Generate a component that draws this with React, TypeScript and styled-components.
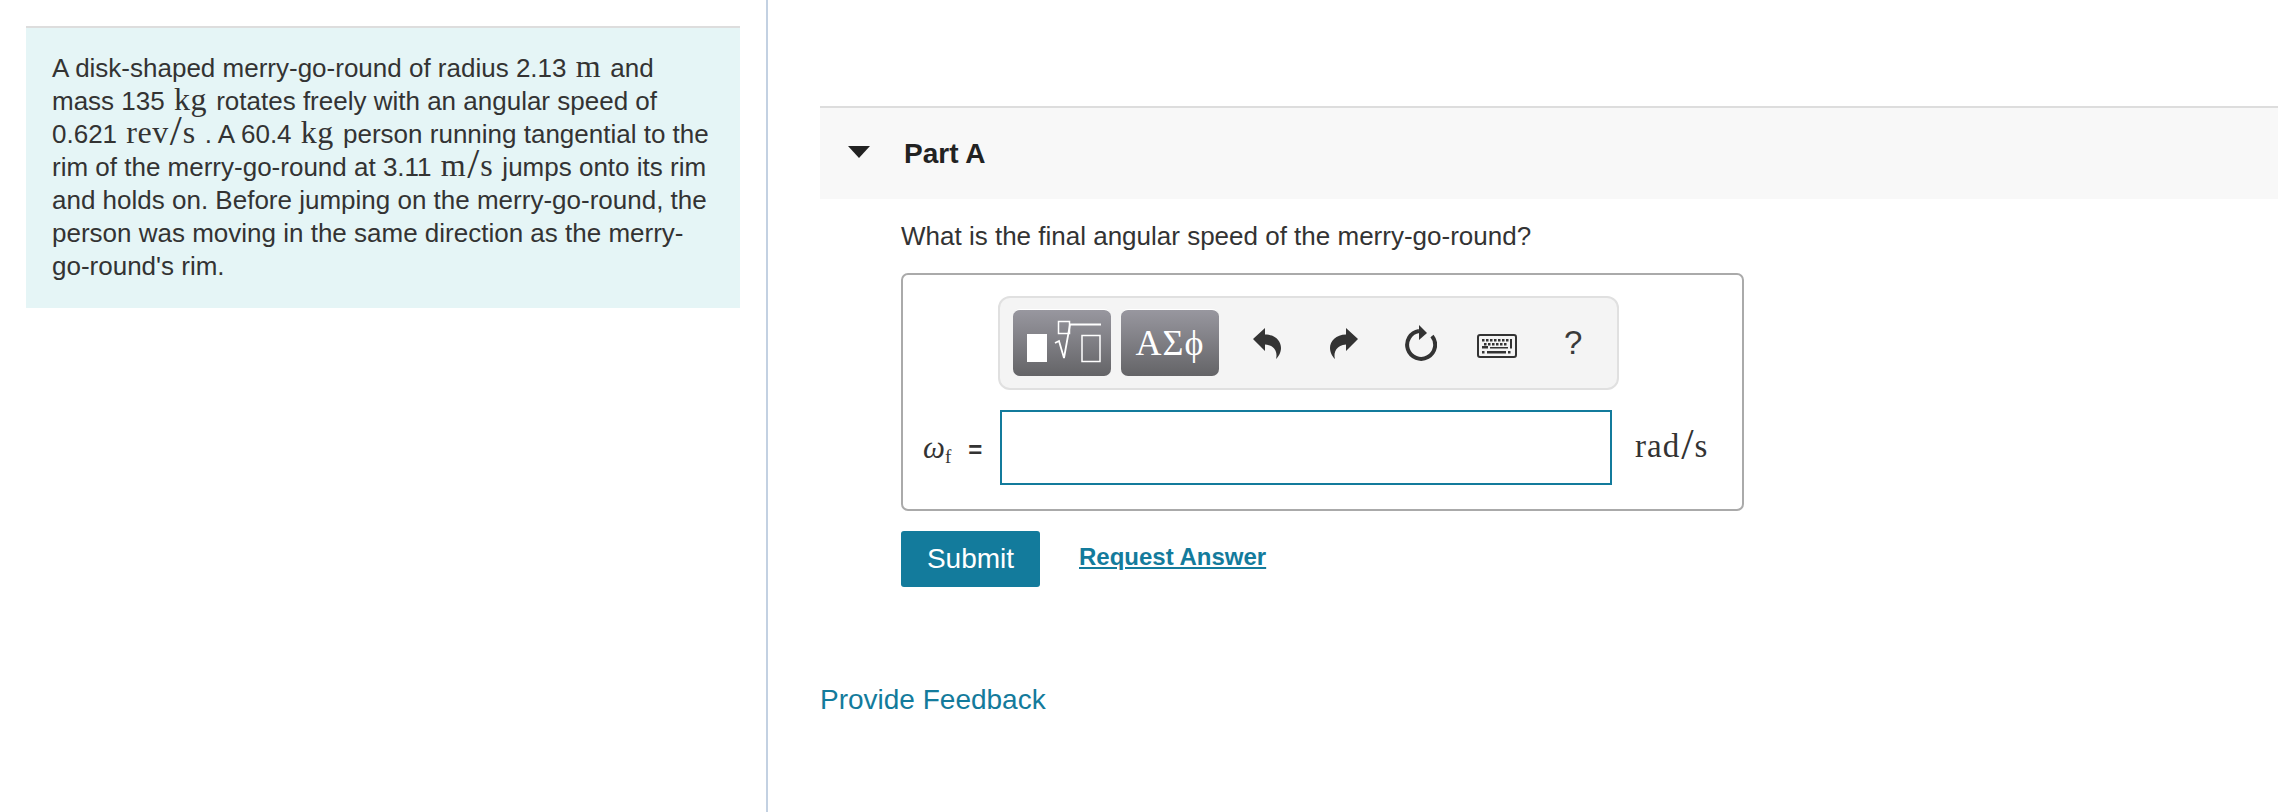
import React from "react";
import styled, { createGlobalStyle } from "styled-components";

const Global = createGlobalStyle`
  html, body { margin: 0; padding: 0; background: #fff; }
  body { font-family: "Liberation Sans", Arial, sans-serif; color: #333; }
`;

const Page = styled.div`
  display: flex;
  height: 812px;
  overflow: hidden;
`;

const LeftColumn = styled.aside`
  box-sizing: border-box;
  width: 768px;
  height: 100%;
  flex: none;
  padding: 26px 26px 0 26px;
  border-right: 2px solid #c3d1e2;
`;

const Statement = styled.div`
  box-sizing: border-box;
  width: 714px;
  height: 282px;
  padding: 24px 26px 0;
  background: #e5f5f6;
  border-top: 2px solid #dddddd;
  font-size: 26px;
  line-height: 33px;
`;

const Unit = styled.span`
  font-family: "Liberation Serif", "Times New Roman", serif;
  font-size: 32px;
  line-height: 0;
  letter-spacing: 0.5px;
  padding: 0 2px;
`;

const Slash = styled.span`
  font-size: 1.35em;
  font-weight: 400;
  line-height: 0;
  vertical-align: -2px;
  letter-spacing: 0;
  padding: 0 1px;
`;

const RightColumn = styled.main`
  flex: 1;
  padding: 106px 0 0 52px;
`;

const PartHeader = styled.header`
  box-sizing: border-box;
  height: 93px;
  display: flex;
  align-items: center;
  background: #f8f8f8;
  border-top: 2px solid #dddddd;
  padding-left: 28px;
`;

const Caret = styled.span`
  width: 0;
  height: 0;
  border-left: 11px solid transparent;
  border-right: 11px solid transparent;
  border-top: 12px solid #222;
  margin-right: 34px;
  margin-top: -3px;
`;

const PartTitle = styled.h2`
  margin: 0;
  font-size: 28px;
  font-weight: 700;
  color: #222;
`;

const PartBody = styled.section`
  padding-left: 81px;
`;

const Question = styled.p`
  margin: 21px 0 20px;
  font-size: 26px;
  line-height: 33px;
`;

const AnswerBox = styled.div`
  box-sizing: border-box;
  width: 843px;
  height: 238px;
  border: 2px solid #aaaaaa;
  border-radius: 7px;
  padding: 21px 0 0 21px;
`;

const Toolbar = styled.div`
  box-sizing: border-box;
  width: 621px;
  height: 94px;
  margin-left: 74px;
  display: flex;
  align-items: center;
  padding-left: 13px;
  background: #f4f4f4;
  border: 2px solid #e0e0e0;
  border-radius: 12px;
`;

const TemplateButton = styled.button`
  box-sizing: border-box;
  width: 98px;
  height: 67px;
  margin: -2px 10px 0 0;
  padding: 0;
  display: flex;
  align-items: center;
  justify-content: center;
  border: none;
  border-radius: 7px;
  border-top: 1px solid #fff;
  background: linear-gradient(#98979f, #646467);
  color: #fff;
`;

const GreekLabel = styled.span`
  font-family: "Liberation Serif", "DejaVu Serif", serif;
  font-size: 36px;
  letter-spacing: 1px;
`;

const ToolSlot = styled.span<{ $drop?: number }>`
  width: 76.500px;
  flex: none;
  display: flex;
  align-items: center;
  justify-content: center;
  margin-top: ${(p) => p.$drop ?? 0}px;
  color: #333;
`;

const HelpMark = styled.span`
  font-size: 33px;
  color: #3a3a3a;
`;

const InputRow = styled.div`
  display: flex;
  align-items: center;
  margin-top: 20px;
`;

const Label = styled.span`
  width: 76px;
  flex: none;
  display: flex;
  align-items: baseline;
  font-family: "Liberation Serif", serif;
  font-size: 29px;
  color: #333;
`;

const Omega = styled.i`
  font-size: 31px;
  margin-left: -1px;
`;

const Sub = styled.span`
  font-size: 19px;
  position: relative;
  top: 5px;
  margin-right: 17px;
`;

const Equals = styled.span`
  font-family: "Liberation Sans", sans-serif;
  font-size: 24px;
  font-weight: 700;
`;

const AnswerInput = styled.input`
  box-sizing: border-box;
  width: 612px;
  height: 75px;
  flex: none;
  background: #fff;
  border: 2px solid #137b9c;
  outline: none;
`;

const UnitLabel = styled.span`
  margin-left: 23px;
  margin-top: -2px;
  font-family: "Liberation Serif", serif;
  font-size: 33px;
  letter-spacing: 1px;
  color: #333;
`;

const Actions = styled.div`
  display: flex;
  align-items: center;
  margin-top: 20px;
`;

const SubmitButton = styled.button`
  box-sizing: border-box;
  width: 139px;
  height: 56px;
  border: none;
  border-radius: 3px;
  background: #137b9c;
  color: #fff;
  font-family: "Liberation Sans", sans-serif;
  font-size: 28px;
`;

const RequestLink = styled.a`
  margin: -4px 0 0 39px;
  font-size: 24px;
  font-weight: 700;
  color: #137b9c;
  text-decoration: underline;
`;

const FeedbackLink = styled.a`
  display: block;
  margin-top: 93px;
  font-size: 28px;
  line-height: 40px;
  color: #137b9c;
`;

const TemplateIcon = () => (
  <svg width="98" height="66" viewBox="0 0 98 66" fill="none" aria-hidden="true">
    <rect x="14" y="24" width="20" height="28" fill="#fff" />
    <rect x="45.500" y="11.500" width="11" height="12" stroke="#fff" strokeWidth="1.500" />
    <path d="M42 33l4-2 5 17 6-33.500h31" stroke="#fff" strokeWidth="1.800" />
    <rect x="69" y="25.500" width="18" height="26" stroke="#fff" strokeWidth="1.500" />
  </svg>
);

const UndoIcon = () => (
  <svg width="28" height="31" viewBox="0 0 28 31" aria-hidden="true">
    <path d="M0 11 12 0v6.500C22 6.500 28 13 28 20c0 5-3 9-5 11 2-7-2-14-11-14.500V23z" fill="currentColor" />
  </svg>
);

const RedoIcon = () => (
  <svg width="28" height="31" viewBox="0 0 28 31" aria-hidden="true">
    <path d="M28 11 16 0v6.500C6 6.500 0 13 0 20c0 5 3 9 5 11-2-7 2-14 11-14.500V23z" fill="currentColor" />
  </svg>
);

const ResetIcon = () => (
  <svg width="34" height="38" viewBox="0 0 34 38" fill="none" aria-hidden="true">
    <path d="M29 12A14 14 0 1 1 16 7" stroke="currentColor" strokeWidth="4" />
    <path d="M16 1l8 8-8 7z" fill="currentColor" />
  </svg>
);

const KeyboardIcon = () => {
  const keys = [
    [5, 5], [9, 5], [13, 5], [17, 5], [21, 5], [25, 5], [29, 5],
    [7, 9], [11, 9], [15, 9], [19, 9], [23, 9], [27, 9],
    [5, 17], [31, 17],
  ];
  return (
    <svg width="40" height="24" viewBox="0 0 40 24" aria-hidden="true">
      <rect x="1" y="1" width="38" height="22" rx="2" fill="none" stroke="currentColor" strokeWidth="2" />
      {keys.map(([x, y]) => (
        <rect key={`${x}-${y}`} x={x} y={y} width="2.500" height="2.500" fill="currentColor" />
      ))}
      <rect x="5" y="12" width="6" height="2.500" fill="currentColor" />
      <rect x="13" y="13" width="18" height="1.500" fill="currentColor" />
      <rect x="33" y="5" width="2" height="9.500" fill="currentColor" />
      <rect x="10" y="17" width="19" height="2.500" fill="currentColor" />
    </svg>
  );
};

const RatioUnit = ({ top, bottom }: { top: string; bottom: string }) => (
  <>
    {top}
    <Slash>/</Slash>
    {bottom}
  </>
);

export default function App() {
  return (
    <>
      <Global />
      <Page>
        <LeftColumn>
          <Statement>
            A disk-shaped merry-go-round of radius 2.13 <Unit>m</Unit> and
            <br />
            mass 135 <Unit>kg</Unit> rotates freely with an angular speed of
            <br />
            0.621 <Unit><RatioUnit top="rev" bottom="s" /></Unit> . A 60.4 <Unit>kg</Unit> person running tangential to the
            <br />
            rim of the merry-go-round at 3.11 <Unit><RatioUnit top="m" bottom="s" /></Unit> jumps onto its rim
            <br />
            and holds on. Before jumping on the merry-go-round, the
            <br />
            person was moving in the same direction as the merry-
            <br />
            go-round's rim.
          </Statement>
        </LeftColumn>
        <RightColumn>
          <PartHeader>
            <Caret />
            <PartTitle>Part A</PartTitle>
          </PartHeader>
          <PartBody>
            <Question>What is the final angular speed of the merry-go-round?</Question>
            <AnswerBox>
              <Toolbar>
                <TemplateButton><TemplateIcon /></TemplateButton>
                <TemplateButton><GreekLabel>ΑΣϕ</GreekLabel></TemplateButton>
                <ToolSlot><UndoIcon /></ToolSlot>
                <ToolSlot><RedoIcon /></ToolSlot>
                <ToolSlot><ResetIcon /></ToolSlot>
                <ToolSlot $drop={6}><KeyboardIcon /></ToolSlot>
                <ToolSlot><HelpMark>?</HelpMark></ToolSlot>
              </Toolbar>
              <InputRow>
                <Label>
                  <Omega>ω</Omega>
                  <Sub>f</Sub>
                  <Equals>=</Equals>
                </Label>
                <AnswerInput type="text" aria-label="answer" />
                <UnitLabel><RatioUnit top="rad" bottom="s" /></UnitLabel>
              </InputRow>
            </AnswerBox>
            <Actions>
              <SubmitButton>Submit</SubmitButton>
              <RequestLink>Request Answer</RequestLink>
            </Actions>
          </PartBody>
          <FeedbackLink>Provide Feedback</FeedbackLink>
        </RightColumn>
      </Page>
    </>
  );
}
